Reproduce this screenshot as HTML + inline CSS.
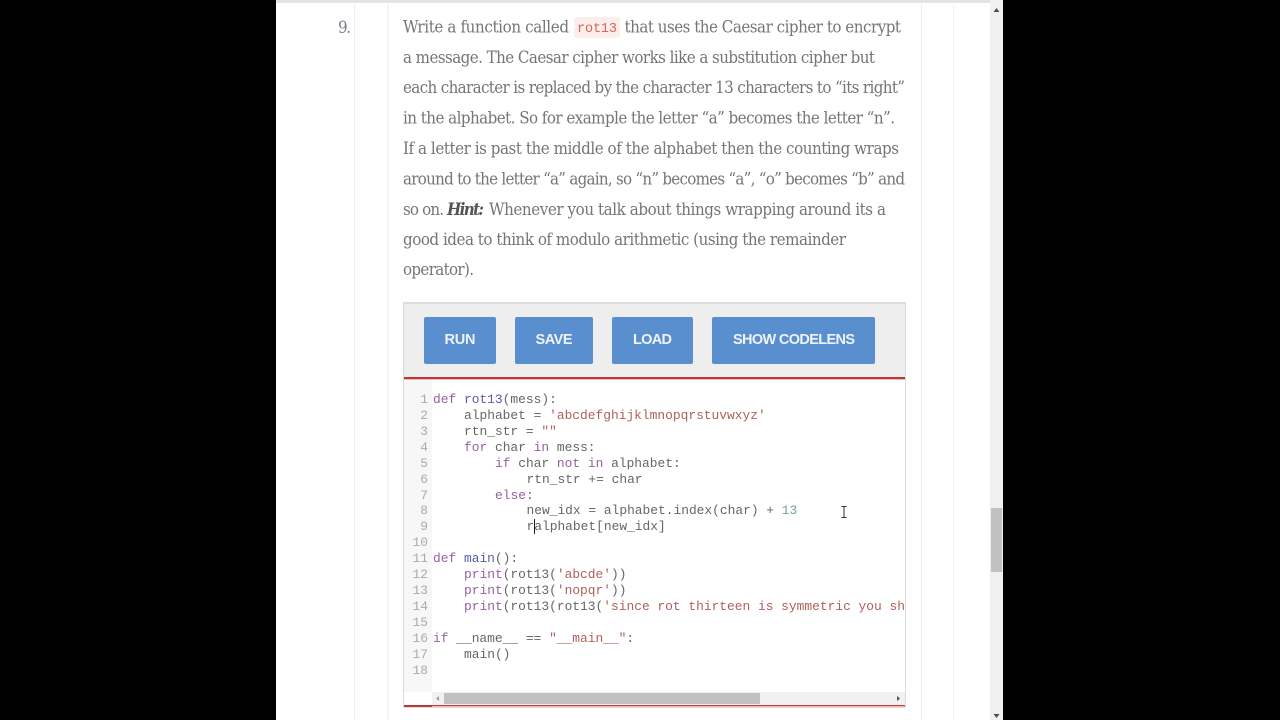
<!DOCTYPE html>
<html><head><meta charset="utf-8"><style>
html,body{margin:0;padding:0;background:#000;width:1280px;height:720px;overflow:hidden}
svg{position:absolute;left:0;top:0;display:block}
#root{filter:blur(0.35px)}
.b{font-family:"DejaVu Serif","Liberation Serif",serif;font-stretch:condensed;font-size:16.8px;fill:#757575}
.c{font-family:"Liberation Mono",monospace;font-size:12.9px;fill:#666}
.n{font-family:"Liberation Mono",monospace;font-size:12.9px;fill:#aaa;text-anchor:end}
.k{fill:#96609f}.d{fill:#5a5ab0}.s{fill:#b0605a}.m{fill:#6fa598}
.t{font-family:"Liberation Sans",sans-serif;font-weight:bold;font-size:14.5px;fill:#eef3fa;text-anchor:middle}
</style></head><body>
<svg id="root" width="1280" height="720" viewBox="0 0 1280 720">
<rect x="0" y="0" width="1280" height="720" fill="#000"/>
<rect x="276" y="0" width="727" height="720" fill="#fff"/>
<rect x="276" y="0" width="714" height="3" fill="#e4e4e4"/>
<rect x="354" y="4" width="1" height="716" fill="#f0f0f0"/>
<rect x="387" y="4" width="2" height="716" fill="#f3f3f3"/>
<rect x="921" y="4" width="1" height="716" fill="#ececec"/>
<rect x="953" y="4" width="1" height="716" fill="#f4f4f4"/>

<rect x="990" y="0" width="13" height="720" fill="#f1f1f1"/>
<rect x="991" y="508" width="11" height="64" fill="#c1c1c1"/>
<path d="M996.500 8l-3 4h6z" fill="#505050"/>
<path d="M996.500 718l-3-4h6z" fill="#505050"/>

<text x="338" y="33" class="b" style="fill:#77808c" textLength="13">9.</text>

<text x="403" y="32.500" class="b" textLength="166">Write a function called</text>
<rect x="574" y="17" width="46" height="21" rx="3" fill="#fbeeec"/>
<text x="577" y="32" font-family="Liberation Mono,monospace" font-size="13.5" fill="#d9645a" textLength="40">rot13</text>
<text x="624.500" y="32.500" class="b" textLength="276.500">that uses the Caesar cipher to encrypt</text>
<text x="403" y="63" class="b" textLength="472">a message. The Caesar cipher works like a substitution cipher but</text>
<text x="403" y="93" class="b" textLength="502">each character is replaced by the character 13 characters to “its right”</text>
<text x="403" y="123.500" class="b" textLength="492">in the alphabet. So for example the letter “a” becomes the letter “n”.</text>
<text x="403" y="154" class="b" textLength="496">If a letter is past the middle of the alphabet then the counting wraps</text>
<text x="403" y="184.500" class="b" textLength="502">around to the letter “a” again, so “n” becomes “a”, “o” becomes “b” and</text>
<text x="403" y="215" class="b" textLength="41">so on.</text>
<text x="447" y="215" class="b" textLength="37" style="font-weight:bold;font-style:italic;fill:#555">Hint:</text>
<text x="489" y="215" class="b" textLength="397">Whenever you talk about things wrapping around its a</text>
<text x="403" y="245" class="b" textLength="443">good idea to think of modulo arithmetic (using the remainder</text>
<text x="403" y="275" class="b" textLength="71">operator).</text>

<rect x="403" y="302" width="503" height="406" fill="#dcdcdc"/>
<rect x="404" y="304" width="501" height="403" fill="#fff"/>
<rect x="404" y="304" width="501" height="73" fill="#eeeeee"/>
<rect x="404" y="377" width="501" height="2" fill="#b83a3a"/>
<rect x="404" y="379" width="501" height="1" fill="#eeb5b0"/>
<rect x="404" y="380" width="28" height="312" fill="#f7f7f7"/>

<rect x="424" y="317" width="72" height="47" rx="2" fill="#5a8fcf"/>
<rect x="515" y="317" width="78" height="47" rx="2" fill="#5a8fcf"/>
<rect x="612" y="317" width="81" height="47" rx="2" fill="#5a8fcf"/>
<rect x="712" y="317" width="163" height="47" rx="2" fill="#5a8fcf"/>
<text x="444.500" y="344" class="t" style="text-anchor:start" textLength="31">RUN</text>
<text x="535.500" y="344" class="t" style="text-anchor:start" textLength="37">SAVE</text>
<text x="633" y="344" class="t" style="text-anchor:start" textLength="39">LOAD</text>
<text x="733" y="344" class="t" style="text-anchor:start" textLength="122">SHOW CODELENS</text>

<text class="n" x="428" y="403">1</text><text class="n" x="428" y="419">2</text><text class="n" x="428" y="435">3</text><text class="n" x="428" y="451">4</text><text class="n" x="428" y="467">5</text><text class="n" x="428" y="483">6</text><text class="n" x="428" y="499">7</text><text class="n" x="428" y="514">8</text><text class="n" x="428" y="530">9</text><text class="n" x="428" y="546">10</text><text class="n" x="428" y="562">11</text><text class="n" x="428" y="578">12</text><text class="n" x="428" y="594">13</text><text class="n" x="428" y="610">14</text><text class="n" x="428" y="626">15</text><text class="n" x="428" y="642">16</text><text class="n" x="428" y="658">17</text><text class="n" x="428" y="674">18</text>

<svg x="433" y="384" width="472" height="300" viewBox="433 384 472 300">
<text class="c" x="433" y="403"><tspan class="k">def</tspan> <tspan class="d">rot13</tspan>(mess):</text>
<text class="c" x="464" y="419">alphabet = <tspan class="s">'abcdefghijklmnopqrstuvwxyz'</tspan></text>
<text class="c" x="464" y="435">rtn_str = <tspan class="s">""</tspan></text>
<text class="c" x="464" y="451"><tspan class="k">for</tspan> char <tspan class="k">in</tspan> mess:</text>
<text class="c" x="495" y="467"><tspan class="k">if</tspan> char <tspan class="k">not</tspan> <tspan class="k">in</tspan> alphabet:</text>
<text class="c" x="526.500" y="483">rtn_str += char</text>
<text class="c" x="495" y="499"><tspan class="k">else</tspan>:</text>
<text class="c" x="526.500" y="514">new_idx = alphabet.index(char) + <tspan class="m">13</tspan></text>
<text class="c" x="526.500" y="530">ralphabet[new_idx]</text>
<text class="c" x="433" y="562"><tspan class="k">def</tspan> <tspan class="d">main</tspan>():</text>
<text class="c" x="464" y="578"><tspan class="k">print</tspan>(rot13(<tspan class="s">'abcde'</tspan>))</text>
<text class="c" x="464" y="594"><tspan class="k">print</tspan>(rot13(<tspan class="s">'nopqr'</tspan>))</text>
<text class="c" x="464" y="610"><tspan class="k">print</tspan>(rot13(rot13(<tspan class="s">'since rot thirteen is symmetric you should see this message'</tspan>)))</text>
<text class="c" x="433" y="642"><tspan class="k">if</tspan> __name__ == <tspan class="s">"__main__"</tspan>:</text>
<text class="c" x="464" y="658">main()</text>
</svg>
<rect x="534" y="519" width="1" height="15" fill="#222"/>

<rect x="432" y="692" width="473" height="13" fill="#f1f1f1"/>
<rect x="444" y="693" width="316" height="11" fill="#c1c1c1"/>
<path d="M436 698.500l3-2.500v5z" fill="#a0a0a0"/>
<path d="M900 698.500l-3-2.500v5z" fill="#505050"/>
<rect x="404" y="705" width="28" height="2" fill="#b83a3a"/>
<rect x="432" y="705" width="473" height="1" fill="#c04444"/>
<rect x="432" y="706" width="473" height="1" fill="#eeb5b0"/>

<path d="M841.500 506.500h5M841.500 517.500h5M844 507v10" stroke="#333" stroke-width="1" fill="none"/>
</svg>
</body></html>
